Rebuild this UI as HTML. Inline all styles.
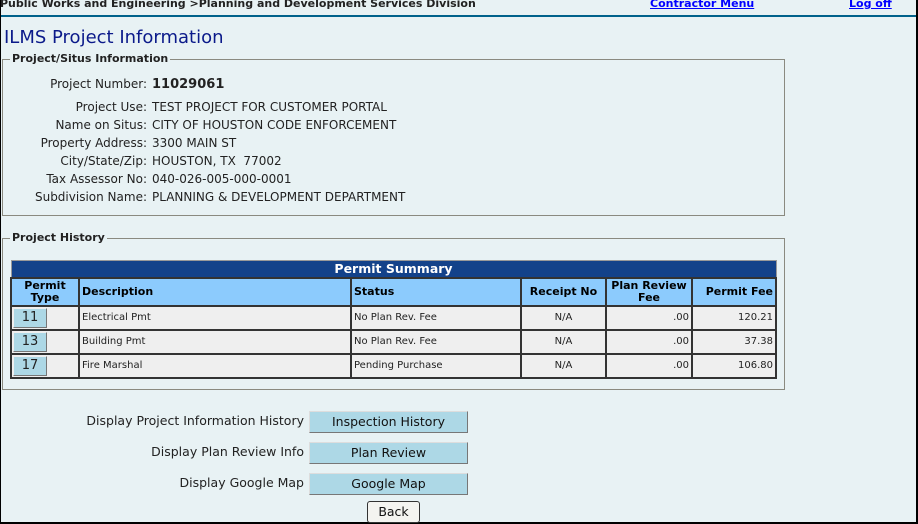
<html><head><style>
body{margin:0;width:918px;height:524px;background:#e8f2f4;font-family:"DejaVu Sans",Verdana,sans-serif;position:relative;overflow:hidden}
.a{position:absolute;white-space:nowrap}
.fs{position:absolute;border:1px solid #8a8a80;border-top:1px solid #8a8a80}
.lg{position:absolute;background:#e8f2f4;font-weight:bold;font-size:11px;padding:0 2px;color:#222}
.lb{position:absolute;right:771px;font-size:12px;color:#222;white-space:nowrap}
.v{position:absolute;left:152px;font-size:12px;color:#222;white-space:nowrap}
table{position:absolute;left:10px;top:260px;width:767px;border-collapse:collapse;border:1px solid #999;font-size:10px}
td,th{border:2px solid #333;padding:0 2px;height:20px}
th{background:#8ccbfd;font-size:11px;line-height:12px}
td{background:#efefef;color:#222}
.b{position:absolute;background:#add8e6;border:1px solid #ddd;border-right-color:#777;border-bottom-color:#777;text-align:center;color:#111;box-sizing:border-box;font-family:"DejaVu Sans",sans-serif;font-size:12.5px}
.pb{display:inline-block;width:32px;height:18px;background:#add8e6;border:1px solid #eee;border-right-color:#777;border-bottom-color:#777;text-align:center;font-size:13px;line-height:18px;font-family:"DejaVu Sans",sans-serif}
</style></head><body>
<div class="a" style="left:0;top:0;width:1px;height:524px;background:#000"></div>
<div class="a" style="left:916px;top:0;width:2px;height:524px;background:#000"></div>
<div class="a" style="left:0;top:522px;width:918px;height:2px;background:#000"></div>
<div class="a" style="left:0;top:-3px;font-weight:bold;font-size:11px;color:#222">Public Works and Engineering &gt;Planning and Development Services Division</div>
<div class="a" style="left:650px;top:-3px;font-weight:bold;font-size:11px;color:#00f;text-decoration:underline">Contractor Menu</div>
<div class="a" style="left:849px;top:-3px;font-weight:bold;font-size:11px;color:#00f;text-decoration:underline">Log off</div>
<div class="a" style="left:1px;top:15px;width:915px;height:2px;background:#00628b"></div>
<div class="a" style="left:4px;top:27px;font-size:18px;color:#0b1a8a">ILMS Project Information</div>

<div class="fs" style="left:2px;top:59px;width:781px;height:155px"></div>
<div class="lg" style="left:10px;top:52px">Project/Situs Information</div>
<div class="lb" style="top:77px">Project Number:</div><div class="v" style="top:77px;font-weight:bold;font-size:13px">11029061</div>
<div class="lb" style="top:100px">Project Use:</div><div class="v" style="top:100px">TEST PROJECT FOR CUSTOMER PORTAL</div>
<div class="lb" style="top:118px">Name on Situs:</div><div class="v" style="top:118px">CITY OF HOUSTON CODE ENFORCEMENT</div>
<div class="lb" style="top:136px">Property Address:</div><div class="v" style="top:136px">3300 MAIN ST</div>
<div class="lb" style="top:154px">City/State/Zip:</div><div class="v" style="top:154px">HOUSTON, TX&nbsp; 77002</div>
<div class="lb" style="top:172px">Tax Assessor No:</div><div class="v" style="top:172px">040-026-005-000-0001</div>
<div class="lb" style="top:190px">Subdivision Name:</div><div class="v" style="top:190px">PLANNING &amp; DEVELOPMENT DEPARTMENT</div>

<div class="fs" style="left:2px;top:238px;width:781px;height:150px"></div>
<div class="lg" style="left:10px;top:231px">Project History</div>
<table>
<tr><td colspan="6" style="background:#13428a;color:#fff;font-weight:bold;font-size:12.5px;text-align:center;height:17px;border:none;padding:0">Permit Summary</td></tr>
<tr style="height:28px"><th style="width:62px;height:24px">Permit<br>Type</th><th style="text-align:left;width:266px">Description</th><th style="text-align:left;width:164px">Status</th><th style="width:79px">Receipt No</th><th style="width:80px">Plan Review<br>Fee</th><th style="text-align:right">Permit Fee</th></tr>
<tr><td style="padding:1px;height:19px"><span class="pb">11</span></td><td>Electrical Pmt</td><td>No Plan Rev. Fee</td><td style="text-align:center">N/A</td><td style="text-align:right">.00</td><td style="text-align:right">120.21</td></tr>
<tr><td style="padding:1px;height:19px"><span class="pb">13</span></td><td>Building Pmt</td><td>No Plan Rev. Fee</td><td style="text-align:center">N/A</td><td style="text-align:right">.00</td><td style="text-align:right">37.38</td></tr>
<tr><td style="padding:1px;height:19px"><span class="pb">17</span></td><td>Fire Marshal</td><td>Pending Purchase</td><td style="text-align:center">N/A</td><td style="text-align:right">.00</td><td style="text-align:right">106.80</td></tr>
</table>

<div class="lb" style="top:413px;right:614px;font-size:12.5px">Display Project Information History</div>
<div class="lb" style="top:444px;right:614px;font-size:12.5px">Display Plan Review Info</div>
<div class="lb" style="top:475px;right:614px;font-size:12.5px">Display Google Map</div>
<div class="b" style="left:309px;top:411px;width:159px;height:22px;line-height:20px">Inspection History</div>
<div class="b" style="left:309px;top:442px;width:159px;height:22px;line-height:20px">Plan Review</div>
<div class="b" style="left:309px;top:473px;width:159px;height:22px;line-height:20px">Google Map</div>
<div class="b" style="left:367px;top:501px;width:53px;height:22px;line-height:20px;background:#f4f4f0;border:1px solid #333;border-radius:3px">Back</div>
</body></html>
